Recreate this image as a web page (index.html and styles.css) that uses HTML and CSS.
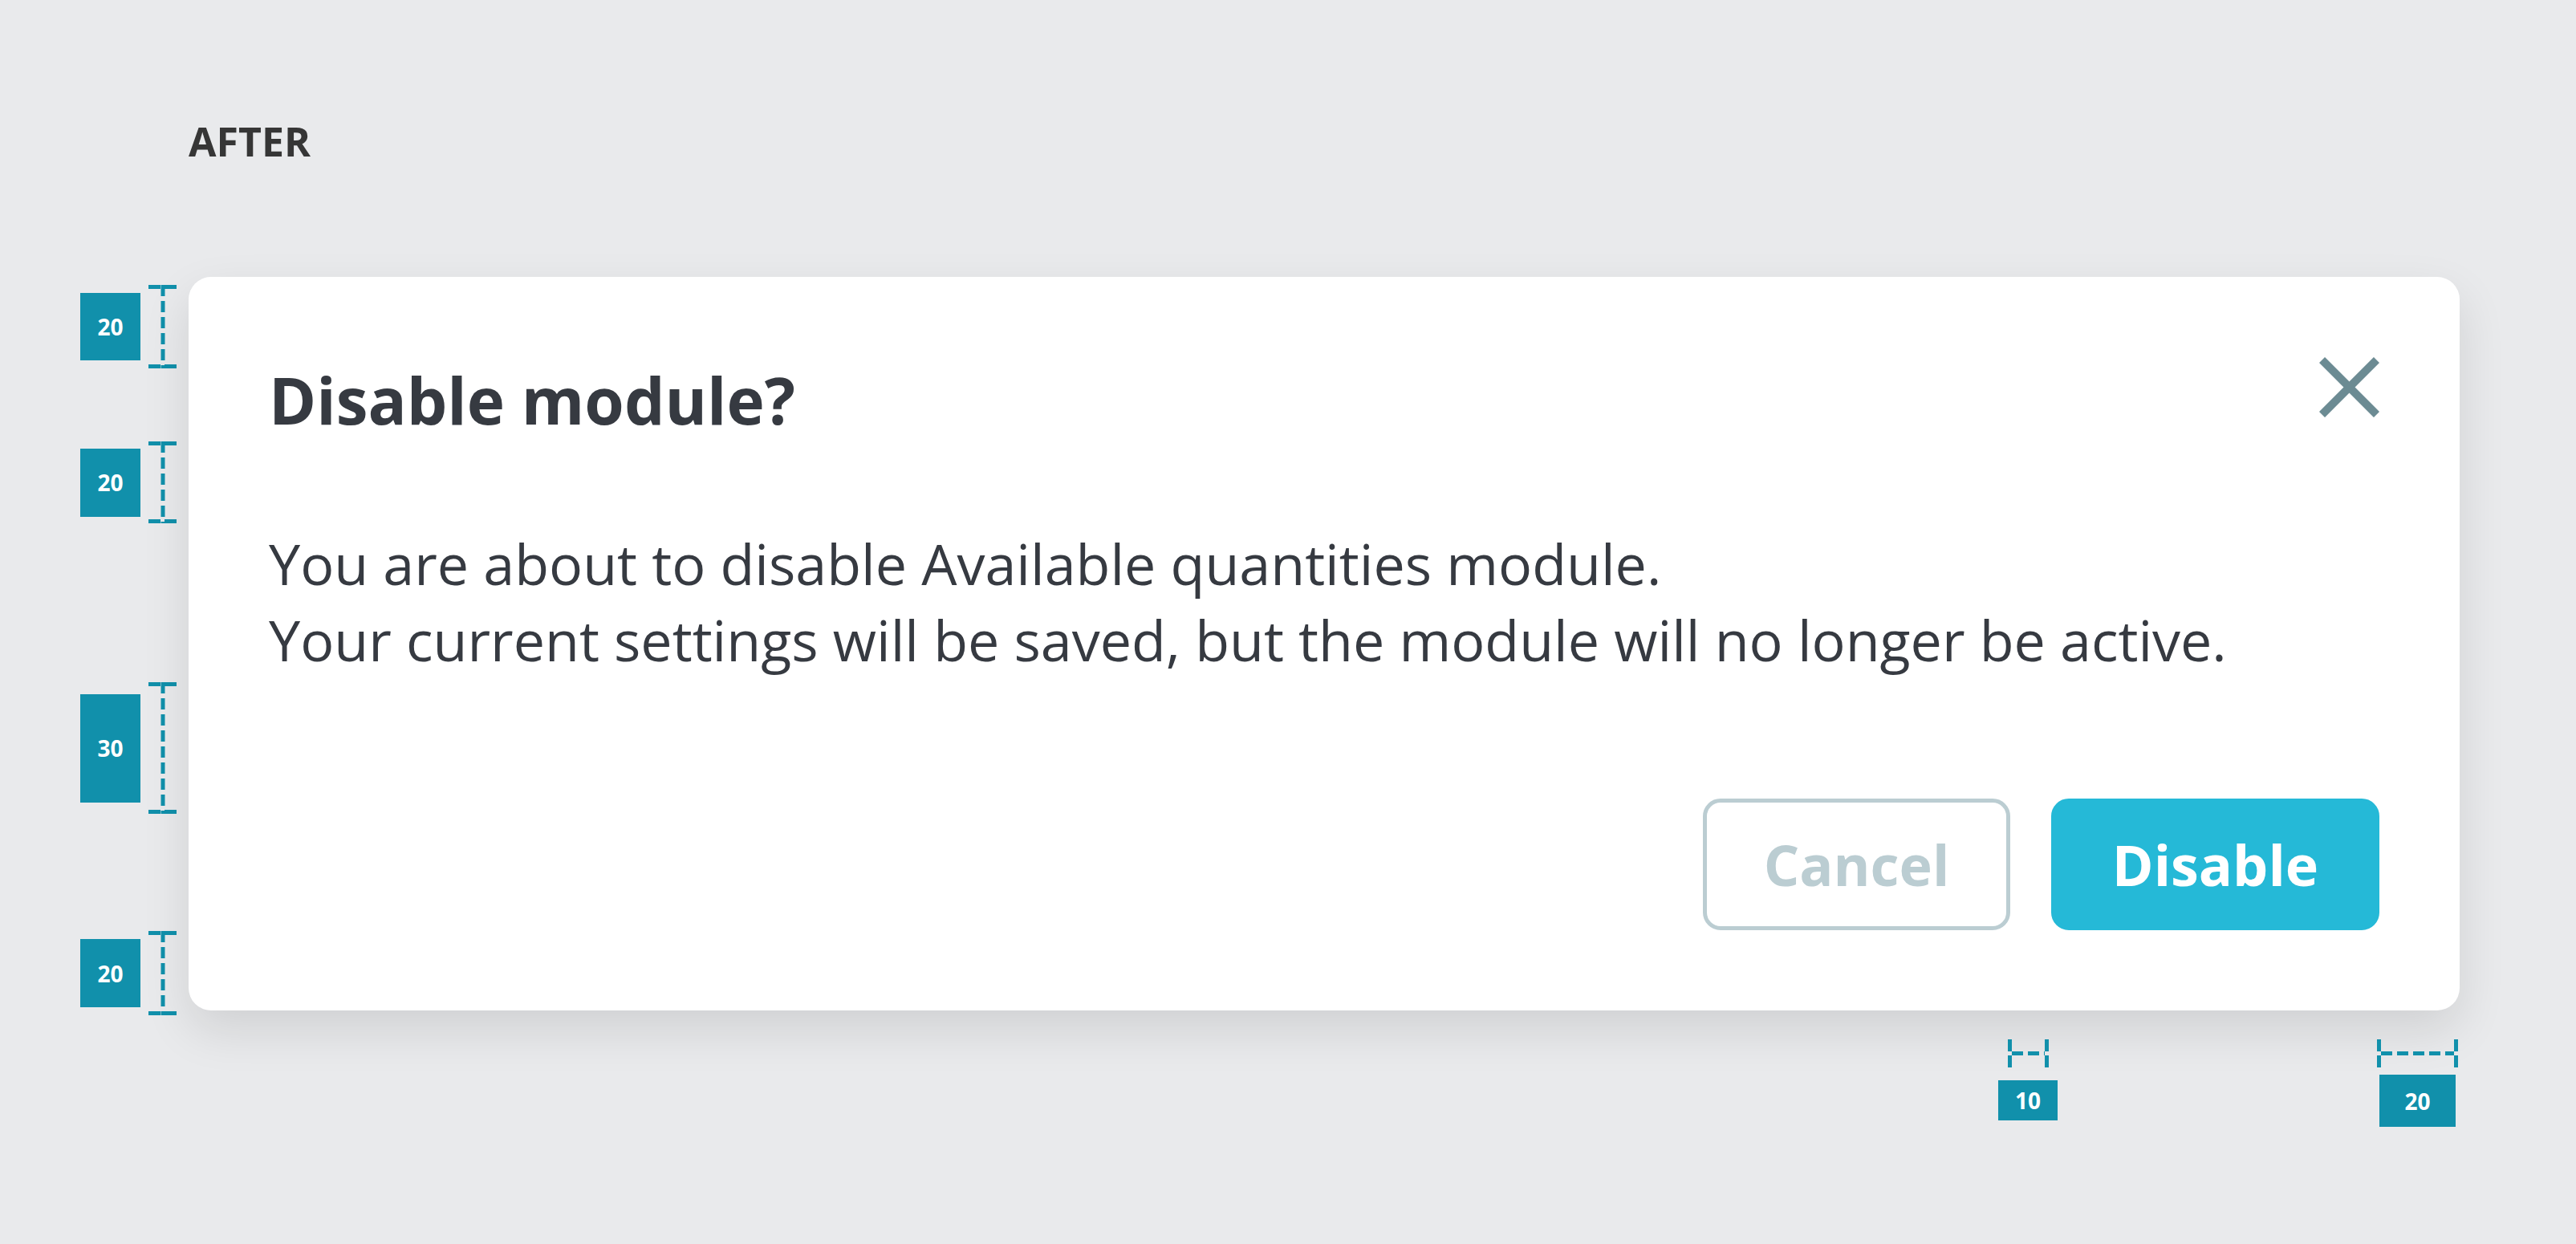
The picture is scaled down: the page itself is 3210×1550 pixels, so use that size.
FILE: index.html
```html
<!DOCTYPE html>
<html lang="en">
<head>
<meta charset="utf-8">
<title>Disable module dialog — spacing spec</title>
<link rel="stylesheet" href="styles.css">
</head>
<body>
<div class="page">
  <div class="label">AFTER</div>
  <div class="stage">
    <div class="rulers">
      <div class="vmark m1">
        <div class="tag">20</div>
        <svg class="vline" width="35" height="104" viewBox="0 0 35 104"><path d="M0 2.5H15M20 2.5H35M0 101.5H15M20 101.5H35" /><path class="dash" d="M18 0V104" /></svg>
      </div>
      <div class="vmark m2">
        <div class="tag">20</div>
        <svg class="vline" width="35" height="102" viewBox="0 0 35 102"><path d="M0 2.5H15M20 2.5H35M0 99.5H15M20 99.5H35" /><path class="dash" d="M18 0V102" /></svg>
      </div>
      <div class="vmark m3">
        <div class="tag">30</div>
        <svg class="vline" width="35" height="164" viewBox="0 0 35 164"><path d="M0 2.5H15M20 2.5H35M0 161.5H15M20 161.5H35" /><path class="dash" d="M18 0V164" /></svg>
      </div>
      <div class="vmark m4">
        <div class="tag">20</div>
        <svg class="vline" width="35" height="105" viewBox="0 0 35 105"><path d="M0 2.5H15M20 2.5H35M0 102.5H15M20 102.5H35" /><path class="dash" d="M18 0V105" /></svg>
      </div>
    </div>

    <div class="modal">
      <div class="modal-head">
        <h1 class="title">Disable module?</h1>
        <svg class="close" width="75" height="75" viewBox="0 0 75 75"><path d="M3.5 3.5L71.5 71.5M71.5 3.5L3.5 71.5" /></svg>
      </div>
      <p class="text">You are about to disable Available quantities module.<br>Your current settings will be saved, but the module will no longer be active.</p>
      <div class="actions">
        <button class="btn btn-cancel">Cancel</button>
        <button class="btn btn-primary">Disable</button>
      </div>
    </div>

    <div class="bottom-rulers">
      <div class="hmark h10">
        <svg class="hline" width="51" height="35" viewBox="0 0 51 35"><path d="M2.5 0V15M2.5 20V35M48.5 0V15M48.5 20V35" /><path class="dash" d="M5 17.5H46" /></svg>
        <div class="tag small">10</div>
      </div>
      <div class="hmark h20">
        <svg class="hline" width="101" height="35" viewBox="0 0 101 35"><path d="M2.5 0V15M2.5 20V35M98.5 0V15M98.5 20V35" /><path class="dash" d="M5 17.5H96" /></svg>
        <div class="tag wide">20</div>
      </div>
    </div>
  </div>
</div>
</body>
</html>
```

FILE: styles.css
```css
html, body {
  margin: 0;
  padding: 0;
}

body {
  width: 3210px;
  height: 1550px;
  overflow: hidden;
  background: #e9eaec;
  font-family: "Open Sans", "Noto Sans", sans-serif;
  color: #363a41;
}

.page {
  padding: 142px 0 0 100px;
}

.label {
  margin-left: 135px;
  font-weight: 700;
  font-size: 50px;
  line-height: 68px;
  color: #363636;
}

.stage {
  margin-top: 135px;
  display: grid;
  grid-template-columns: 120px 2830px;
  column-gap: 15px;
  align-items: start;
}

/* left vertical spacing rulers */
.rulers {
  display: flex;
  flex-direction: column;
  padding-top: 10px;
}

.vmark {
  display: flex;
  align-items: center;
  gap: 10px;
}

.m2 { margin-top: 91px; }
.m3 { margin-top: 198px; }
.m4 { margin-top: 146px; }

.tag {
  width: 75px;
  height: 84px;
  background: #1190ab;
  color: #ffffff;
  font-weight: 700;
  font-size: 28px;
  display: flex;
  align-items: center;
  justify-content: center;
}

.m2 .tag, .m4 .tag { height: 85px; }
.m3 .tag { height: 135px; }

.vline path,
.hline path {
  fill: none;
  stroke: #1190ab;
  stroke-width: 5;
}

.vline .dash {
  stroke-dasharray: 14 6;
  stroke-dashoffset: 0;
}

.hline .dash {
  stroke-dasharray: 14 6;
}

/* modal */
.modal {
  box-sizing: border-box;
  width: 2830px;
  background: #ffffff;
  border-radius: 28px;
  padding: 100px;
  box-shadow: 0 24px 60px rgba(0, 0, 0, 0.11);
}

.modal-head {
  display: flex;
  justify-content: space-between;
  align-items: flex-start;
}

.title {
  margin: 0;
  font-weight: 700;
  font-size: 80px;
  line-height: 105px;
  color: #363a41;
}

.close path {
  fill: none;
  stroke: #6c8b93;
  stroke-width: 10;
}

.text {
  margin: 105px 0 0;
  font-size: 70px;
  line-height: 95px;
  color: #363a41;
}

.actions {
  margin-top: 150px;
  display: flex;
  justify-content: flex-end;
  gap: 51px;
}

.btn {
  box-sizing: border-box;
  height: 164px;
  border: 5px solid;
  border-radius: 22px;
  padding: 0 75px;
  font-family: "Open Sans", "Noto Sans", sans-serif;
  font-weight: 700;
  font-size: 70px;
  display: flex;
  align-items: center;
  justify-content: center;
  cursor: pointer;
}

.btn-cancel {
  width: 383px;
  background: #ffffff;
  border-color: #bbcdd2;
  color: #bbcdd2;
}

.btn-primary {
  width: 409px;
  background: #25b9d7;
  border-color: #25b9d7;
  color: #ffffff;
}

/* bottom horizontal rulers */
.bottom-rulers {
  grid-column: 2;
  display: flex;
  justify-content: flex-end;
  align-items: flex-start;
  gap: 398px;
  margin-top: 30px;
  padding-right: 2px;
}

.hmark {
  display: flex;
  flex-direction: column;
  align-items: center;
}

.h10 .tag {
  margin-top: 16px;
}

.h20 .tag {
  margin-top: 9px;
}

.tag.small {
  width: 74px;
  height: 50px;
}

.tag.wide {
  width: 95px;
  height: 65px;
}
```
